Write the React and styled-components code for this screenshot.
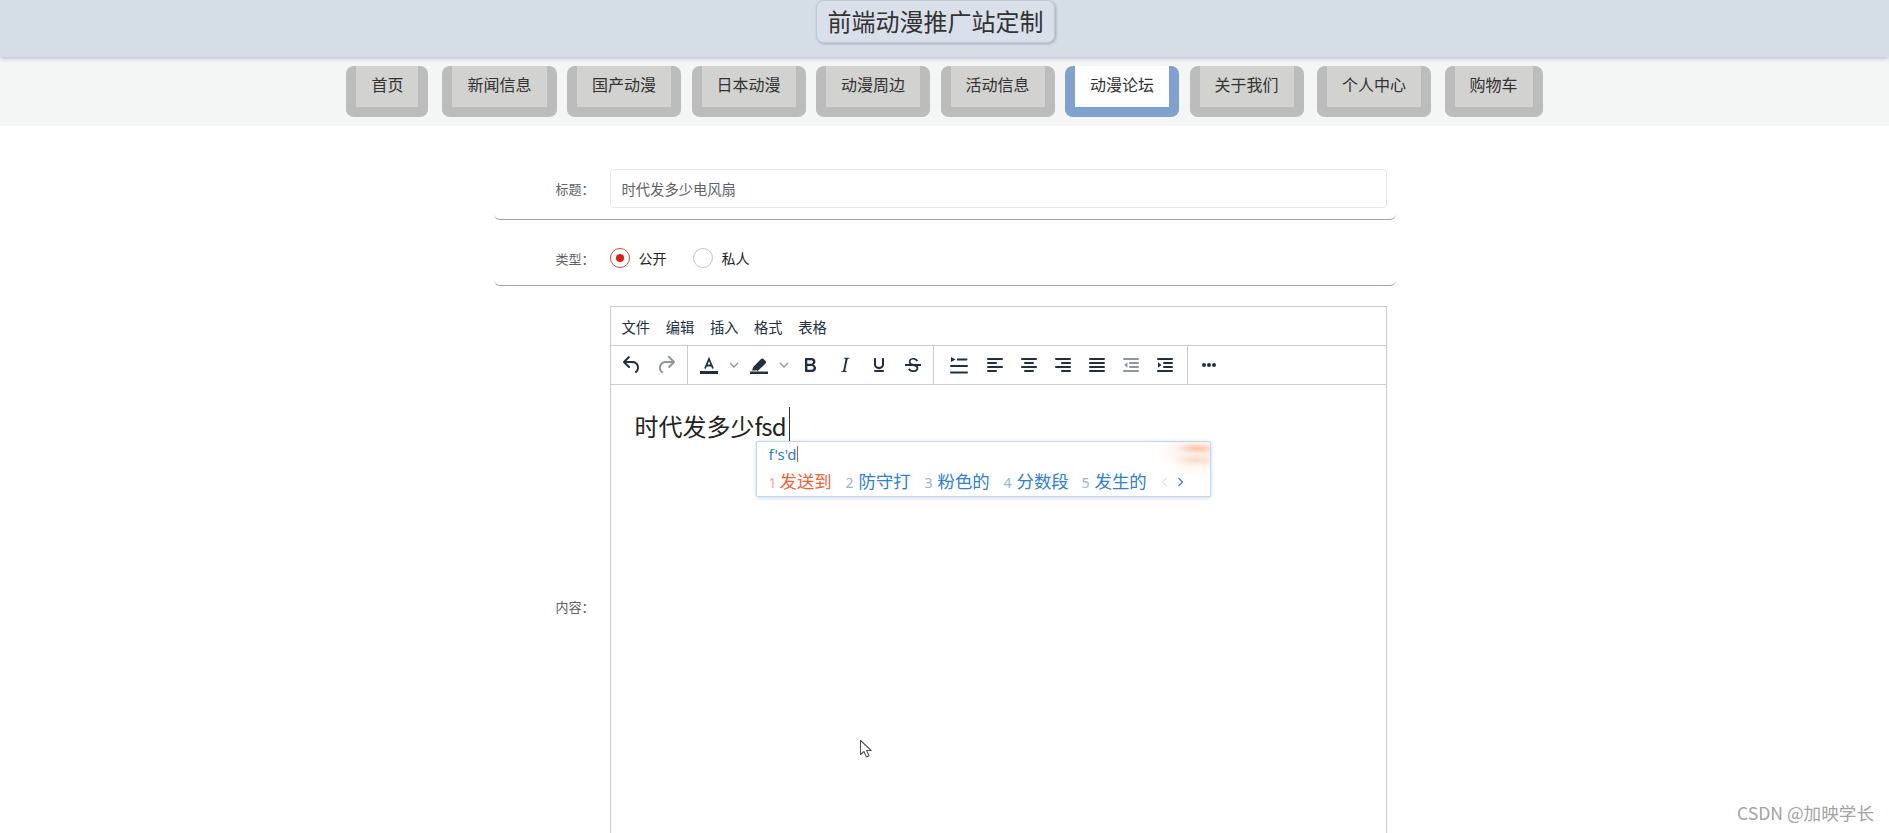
import styled, { createGlobalStyle } from "styled-components";

const GlobalStyle = createGlobalStyle`
    html, body {
        margin: 0;
        padding: 0;
        height: 100%;
        overflow: hidden;
        background: #fff;
        font-family: "Noto Sans CJK SC", "Noto Sans", sans-serif;
    }
`;

const Page = styled.div`
    position: relative;
    width: 1889px;
    height: 833px;
    overflow: hidden;
`;
const Header = styled.header`
    position: relative;
    z-index: 1;
    height: 57px;
    background: #d5dde7;
    box-shadow: 0 1px 5px rgba(90, 100, 120, 0.45);
    display: flex;
    justify-content: center;
`;
const Title = styled.h1`
    margin: 0 18px 0 0;
    box-sizing: border-box;
    width: 239px;
    height: 43px;
    border: 1px solid #c3c9d6;
    border-radius: 8px;
    background: #d9e0ea;
    box-shadow: 1px 1px 3px rgba(90, 100, 120, 0.4);
    font-size: 24px;
    font-weight: 400;
    line-height: 39px;
    text-align: center;
    color: #333;
`;
const NavBar = styled.nav`
    height: 69px;
    background: #f4f6f6;
    display: flex;
    justify-content: center;
    align-items: flex-start;
    gap: 10.5px;
    padding-top: 9px;
    box-sizing: border-box;
`;
const NavItem = styled.a`
    box-sizing: border-box;
    height: 51px;
    margin-left: ${(p) => p.$extra || 0}px;
    padding: 0 15px;
    border: 10px solid ${(p) => (p.$active ? "#7ea2cd" : "#bcbcbc")};
    border-top: none;
    border-radius: 8px;
    background: ${(p) => (p.$active ? "#fff" : "#d2d2d0")};
    font-size: 16px;
    line-height: 37px;
    color: #333;
    white-space: nowrap;
`;

const Form = styled.main`
    width: 902px;
    margin: 0 auto;
    padding-top: 43px;
`;
const Row = styled.div`
    display: flex;
    align-items: center;
    padding: ${(p) => p.$padding};
    margin-top: ${(p) => p.$top || 0}px;
    border-bottom: ${(p) => (p.$line ? "1px solid #9ea4b6" : "none")};
    border-radius: 6px;
`;
const Label = styled.label`
    flex: none;
    width: 101px;
    margin-right: 15px;
    text-align: right;
    font-size: 13px;
    color: #606266;
`;
const TextBox = styled.div`
    box-sizing: border-box;
    width: 777px;
    height: 39px;
    padding: 0 11px;
    border: 1px solid #e8e8e8;
    border-radius: 4px;
    font-size: 14.3px;
    line-height: 37px;
    color: #606266;
`;
const RadioGroup = styled.div`
    display: flex;
    align-items: center;
    height: 20px;
`;
const RadioDot = styled.span`
    box-sizing: border-box;
    width: 20px;
    height: 20px;
    margin-right: 9px;
    border-radius: 50%;
    border: 1.5px solid ${(p) => (p.$on ? "#cc4a40" : "#c4c4c4")};
    display: flex;
    align-items: center;
    justify-content: center;
    &::after {
        content: "";
        width: 8px;
        height: 8px;
        border-radius: 50%;
        background: ${(p) => (p.$on ? "#dc1f12" : "transparent")};
    }
`;
const RadioText = styled.span`
    width: 54px;
    font-size: 14px;
    color: #222;
`;

const Editor = styled.div`
    position: relative;
    box-sizing: border-box;
    width: 777px;
    height: 600px;
    border: 1px solid #ccc;
`;
const MenuBar = styled.div`
    height: 38px;
    padding-left: 11px;
    border-bottom: 1px solid #ccc;
    display: flex;
    align-items: center;
    gap: 15.6px;
`;
const MenuItem = styled.span`
    font-size: 14.3px;
    color: #222f3e;
`;
const ToolBar = styled.div`
    height: 38px;
    border-bottom: 1px solid #ccc;
    display: flex;
`;
const ToolGroup = styled.div`
    display: flex;
    align-items: center;
    padding: 0 4px;
    width: ${(p) => p.$width}px;
    box-sizing: border-box;
    border-right: ${(p) => (p.$last ? "none" : "1px solid #ccc")};
`;
const ToolButton = styled.span`
    flex: none;
    width: ${(p) => p.$width || 34}px;
    height: 34px;
    display: flex;
    align-items: center;
    justify-content: center;
    color: #222f3e;
    opacity: ${(p) => (p.$disabled ? 0.5 : 1)};
`;
const Chevron = styled.span`
    flex: none;
    width: ${(p) => p.$width || 16}px;
    display: flex;
    justify-content: center;
    opacity: 0.5;
    color: #222f3e;
`;
const Content = styled.div`
    position: relative;
    padding: 22px 24px 0;
    font-size: 24px;
    line-height: 36px;
    color: #222;
    display: flex;
    align-items: center;
`;
const Latin = styled.span`
    letter-spacing: -0.9px;
`;
const Caret = styled.span`
    display: inline-block;
    width: 1px;
    height: 37px;
    margin-left: 3px;
    background: #333;
`;
const Ime = styled.div`
    position: absolute;
    left: 145px;
    top: 56px;
    box-sizing: border-box;
    width: 455px;
    height: 56px;
    padding: 2px 12px 0;
    border: 1px solid #c0d8ee;
    border-radius: 2px;
    background:
        radial-gradient(ellipse 20px 5px at 97% 12%, rgba(247, 170, 130, 0.6), transparent),
        radial-gradient(ellipse 24px 6px at 97% 34%, rgba(247, 190, 160, 0.4), transparent),
        radial-gradient(ellipse 44px 26px at 98% 16%, rgba(250, 215, 195, 0.6), transparent),
        #fff;
    box-shadow: 0 1px 4px rgba(110, 140, 170, 0.35);
`;
const ImeInput = styled.div`
    height: 20px;
    font-family: "Noto Sans", sans-serif;
    font-size: 15px;
    line-height: 20px;
    color: #2f7cc8;
    display: flex;
    align-items: center;
    &::after {
        content: "";
        width: 1px;
        height: 16px;
        margin-left: 1px;
        background: #c05a3a;
    }
`;
const Candidates = styled.div`
    display: flex;
    align-items: baseline;
    margin-top: 5px;
`;
const Candidate = styled.span`
    width: ${(p) => p.$width}px;
    font-size: 17.4px;
    line-height: 24px;
    color: ${(p) => (p.$first ? "#ee6338" : "#2f80d2")};
    white-space: nowrap;
`;
const CandidateNumber = styled.span`
    margin-right: ${(p) => (p.$first ? 3 : 5)}px;
    font-family: "Noto Sans", sans-serif;
    font-size: 14px;
    color: ${(p) => (p.$first ? "#f2a68c" : "#93b6d8")};
`;
const Pager = styled.span`
    display: flex;
    align-items: center;
    gap: 9px;
    margin-left: 15px;
    align-self: center;
`;

const Cursor = styled.svg`
    position: absolute;
    left: 859px;
    top: 739px;
`;
const Watermark = styled.div`
    position: absolute;
    right: 15px;
    top: 802px;
    font-size: 17.6px;
    line-height: 22px;
    color: #a3a3a3;
`;

const Svg = ({ children, stroke }) => (
    <svg width="24" height="24" viewBox="0 0 24 24" fill={stroke ? "none" : "currentColor"}
        stroke={stroke ? "currentColor" : "none"} strokeWidth="2" strokeLinecap="round" strokeLinejoin="round">
        {children}
    </svg>
);
const Down = () => (
    <svg width="10" height="10" viewBox="0 0 10 10" fill="none" stroke="currentColor" strokeWidth="1.4">
        <path d="M1 3l4 4 4-4" />
    </svg>
);

const icons = {
    undo: <Svg><path d="M6.4 8H12c3.7 0 6.2 2 6.8 5.1.6 2.7-.4 5.6-2.3 6.8a1 1 0 0 1-1-1.8c1.1-.6 1.8-2.7 1.4-4.6-.5-2.1-2.1-3.5-4.9-3.5H6.4l3.3 3.3a1 1 0 1 1-1.4 1.4l-5-5a1 1 0 0 1 0-1.4l5-5a1 1 0 0 1 1.4 1.4L6.4 8z" /></Svg>,
    redo: <Svg><path d="M17.6 10H12c-2.8 0-4.4 1.4-4.9 3.5-.4 2 .3 4 1.4 4.6a1 1 0 1 1-1 1.8c-2-1.2-2.9-4.1-2.3-6.8.6-3 3-5.1 6.8-5.1h5.6l-3.3-3.3a1 1 0 1 1 1.4-1.4l5 5a1 1 0 0 1 0 1.4l-5 5a1 1 0 0 1-1.4-1.4l3.3-3.3z" /></Svg>,
    color: (
        <svg width="24" height="24" viewBox="0 0 24 24">
            <rect x="3" y="18" width="18" height="3" fill="currentColor" />
            <path d="M8 15.5L12 6l4 9.5M9.5 12.5h5" fill="none" stroke="currentColor" strokeWidth="1.8" />
        </svg>
    ),
    highlight: (
        <Svg>
            <rect x="3" y="18.5" width="18" height="2.5" />
            <path d="M5 17.5l1.2-3.6 7.8-7.8a1.8 1.8 0 0 1 2.5 0l2 2a1.8 1.8 0 0 1 0 2.5L10.7 18l-1.4-.8-1.3 .3z" />
        </Svg>
    ),
    bold: <Svg><path d="M7.8 19c-.3 0-.5 0-.6-.2l-.2-.5V5.7c0-.2 0-.4.2-.5l.6-.2h5c1.5 0 2.7.3 3.5 1 .7.6 1.1 1.4 1.1 2.5a3 3 0 0 1-.6 1.9c-.4.6-1 1-1.6 1.2.4.1.9.3 1.3.6s.8.7 1 1.2c.4.4.5 1 .5 1.6 0 1.3-.4 2.3-1.3 3-.8.7-2.1 1-3.8 1H7.8zm5-8.3c.6 0 1.2-.1 1.6-.5.4-.3.6-.7.6-1.3 0-1.1-.8-1.7-2.3-1.7H9.3v3.5h3.4zm.5 6c.7 0 1.3-.1 1.7-.4.4-.4.6-.9.6-1.5s-.2-1-.7-1.4c-.4-.3-1-.4-2-.4H9.4v3.8h4z" fillRule="evenodd" /></Svg>,
    italic: <Svg><path d="M16.7 4.7l-.1.9h-.3c-.6 0-1 0-1.4.3-.3.3-.4.6-.5 1.1l-2.1 9.8v.6c0 .5.4.8 1.4.8h.2l-.2.8H8l.2-.8h.2c1.1 0 1.8-.5 2-1.5l2-9.8.1-.5c0-.6-.4-.8-1.4-.8h-.3l.2-.9h5.8z" /></Svg>,
    underline: <Svg><path d="M16 5c.6 0 1 .4 1 1v5.5a4 4 0 0 1-.4 1.8l-1 1.4a5.3 5.3 0 0 1-5.5 1 5 5 0 0 1-1.6-1c-.5-.4-.8-.9-1.1-1.4a4 4 0 0 1-.4-1.8V6c0-.6.4-1 1-1s1 .4 1 1v5.5c0 .3 0 .6.2 1l.6.7a3.3 3.3 0 0 0 2.2.8 3.4 3.4 0 0 0 2.2-.8c.3-.2.4-.5.6-.8l.2-.9V6c0-.6.4-1 1-1zM8 17h8c.6 0 1 .4 1 1s-.4 1-1 1H8a1 1 0 0 1 0-2z" /></Svg>,
    strike: <Svg><path d="M15.6 8.5c-.5-.7-1-1.1-1.3-1.3-.6-.4-1.3-.6-2-.6-2.7 0-2.8 1.7-2.8 2.1 0 1.6 1.8 2 3.2 2.3 4.4.9 4.6 2.8 4.6 3.9 0 1.4-.7 4.1-5 4.1A6.2 6.2 0 0 1 7 16.4l1.5-1.1c.4.6 1.6 2 3.7 2 1.6 0 2.5-.4 3-1 .3-.4.3-.8.3-1.1 0-1.2-.9-1.8-3-2.3-2.3-.5-4.6-1-4.6-3.9 0-1.6 1-3.9 4.6-3.9 1.5 0 2.9.6 3.9 1.6.2.2.5.6.8 1l-1.6.8zM4 11h16v2H4z" /></Svg>,
    lineheight: (
        <Svg>
            <path d="M5 4l4.5 2.5L5 9zM11 5.5h9.5a1 1 0 0 1 0 2H11zM5 12h16a1 1 0 0 1 0 2H5a1 1 0 0 1 0-2zM5 18.5h16a1 1 0 0 1 0 2H5a1 1 0 0 1 0-2z" />
        </Svg>
    ),
    left: <Svg><path d="M5 5h14a1 1 0 0 1 0 2H5a1 1 0 1 1 0-2zm0 4h8a1 1 0 0 1 0 2H5a1 1 0 1 1 0-2zm0 8h8a1 1 0 0 1 0 2H5a1 1 0 0 1 0-2zm0-4h14a1 1 0 0 1 0 2H5a1 1 0 0 1 0-2z" /></Svg>,
    center: <Svg><path d="M5 5h14a1 1 0 0 1 0 2H5a1 1 0 1 1 0-2zm3 4h8a1 1 0 0 1 0 2H8a1 1 0 1 1 0-2zm0 8h8a1 1 0 0 1 0 2H8a1 1 0 0 1 0-2zm-3-4h14a1 1 0 0 1 0 2H5a1 1 0 0 1 0-2z" /></Svg>,
    right: <Svg><path d="M5 5h14a1 1 0 0 1 0 2H5a1 1 0 1 1 0-2zm6 4h8a1 1 0 0 1 0 2h-8a1 1 0 0 1 0-2zm0 8h8a1 1 0 0 1 0 2h-8a1 1 0 0 1 0-2zm-6-4h14a1 1 0 0 1 0 2H5a1 1 0 0 1 0-2z" /></Svg>,
    justify: <Svg><path d="M5 5h14a1 1 0 0 1 0 2H5a1 1 0 1 1 0-2zm0 4h14a1 1 0 0 1 0 2H5a1 1 0 1 1 0-2zm0 4h14a1 1 0 0 1 0 2H5a1 1 0 0 1 0-2zm0 4h14a1 1 0 0 1 0 2H5a1 1 0 0 1 0-2z" /></Svg>,
    outdent: <Svg><path d="M5 5h14a1 1 0 0 1 0 2H5a1 1 0 1 1 0-2zm6 4h8a1 1 0 0 1 0 2h-8a1 1 0 0 1 0-2zm0 4h8a1 1 0 0 1 0 2h-8a1 1 0 0 1 0-2zm-6 4h14a1 1 0 0 1 0 2H5a1 1 0 0 1 0-2zM8.5 9.2L5.2 12l3.3 2.8z" /></Svg>,
    indent: <Svg><path d="M5 5h14a1 1 0 0 1 0 2H5a1 1 0 1 1 0-2zm6 4h8a1 1 0 0 1 0 2h-8a1 1 0 0 1 0-2zm0 4h8a1 1 0 0 1 0 2h-8a1 1 0 0 1 0-2zm-6 4h14a1 1 0 0 1 0 2H5a1 1 0 0 1 0-2zM5 9.2L8.5 12 5 14.8z" /></Svg>,
    more: <Svg><circle cx="7" cy="12" r="2" /><circle cx="12" cy="12" r="2" /><circle cx="17" cy="12" r="2" /></Svg>,
};

const navItems = [
    { name: "首页" },
    { name: "新闻信息", extra: 3.6 },
    { name: "国产动漫" },
    { name: "日本动漫" },
    { name: "动漫周边" },
    { name: "活动信息" },
    { name: "动漫论坛", active: true },
    { name: "关于我们" },
    { name: "个人中心", extra: 3 },
    { name: "购物车", extra: 3 },
];
const menus = ["文件", "编辑", "插入", "格式", "表格"];
const candidates = [
    { text: "发送到", width: 77 },
    { text: "防守打", width: 79 },
    { text: "粉色的", width: 79 },
    { text: "分数段", width: 78 },
    { text: "发生的", width: 64 },
];

function App() {
    return (
        <Page>
            <GlobalStyle />
            <Header>
                <Title>前端动漫推广站定制</Title>
            </Header>
            <NavBar>
                {navItems.map((item) => (
                    <NavItem key={item.name} $active={item.active} $extra={item.extra}>{item.name}</NavItem>
                ))}
            </NavBar>
            <Form>
                <Row $line $padding="0 0 11px">
                    <Label>标题：</Label>
                    <TextBox>时代发多少电风扇</TextBox>
                </Row>
                <Row $line $padding="28px 0 17px">
                    <Label>类型：</Label>
                    <RadioGroup>
                        <RadioDot $on />
                        <RadioText>公开</RadioText>
                        <RadioDot />
                        <RadioText>私人</RadioText>
                    </RadioGroup>
                </Row>
                <Row $top={20}>
                    <Label>内容：</Label>
                    <Editor>
                        <MenuBar>
                            {menus.map((m) => <MenuItem key={m}>{m}</MenuItem>)}
                        </MenuBar>
                        <ToolBar>
                            <ToolGroup $width={77}>
                                <ToolButton>{icons.undo}</ToolButton>
                                <ToolButton $disabled>{icons.redo}</ToolButton>
                            </ToolGroup>
                            <ToolGroup $width={246}>
                                <ToolButton>{icons.color}</ToolButton>
                                <Chevron><Down /></Chevron>
                                <ToolButton>{icons.highlight}</ToolButton>
                                <Chevron><Down /></Chevron>
                                <ToolButton $width={36}>{icons.bold}</ToolButton>
                                <ToolButton>{icons.italic}</ToolButton>
                                <ToolButton>{icons.underline}</ToolButton>
                                <ToolButton>{icons.strike}</ToolButton>
                            </ToolGroup>
                            <ToolGroup $width={254}>
                                <ToolButton $width={40}>{icons.lineheight}</ToolButton>
                                <ToolButton>{icons.left}</ToolButton>
                                <ToolButton>{icons.center}</ToolButton>
                                <ToolButton>{icons.right}</ToolButton>
                                <ToolButton>{icons.justify}</ToolButton>
                                <ToolButton $disabled>{icons.outdent}</ToolButton>
                                <ToolButton>{icons.indent}</ToolButton>
                            </ToolGroup>
                            <ToolGroup $last $width={60}>
                                <ToolButton>{icons.more}</ToolButton>
                            </ToolGroup>
                        </ToolBar>
                        <Content>
                            时代发多少<Latin>fsd</Latin><Caret />
                            <Ime>
                                <ImeInput>f's'd</ImeInput>
                                <Candidates>
                                    {candidates.map((c, i) => (
                                        <Candidate key={c.text} $first={i === 0} $width={c.width}>
                                            <CandidateNumber $first={i === 0}>{i + 1}</CandidateNumber>{c.text}
                                        </Candidate>
                                    ))}
                                    <Pager>
                                        <svg width="7" height="12" viewBox="0 0 7 12" fill="none" stroke="#dfe6ee" strokeWidth="1.2"><path d="M5.5 2L1.5 6l4 4" /></svg>
                                        <svg width="7" height="12" viewBox="0 0 7 12" fill="none" stroke="#2f80d2" strokeWidth="1.2"><path d="M1.5 2l4 4-4 4" /></svg>
                                    </Pager>
                                </Candidates>
                            </Ime>
                        </Content>
                    </Editor>
                </Row>
            </Form>
            <Cursor width="14" height="22" viewBox="0 0 14 22">
                <path d="M1.5 1.5v14l3.5-3 2.4 5.5 2.6-1.2-2.4-5.3h4.6z" fill="#fff" stroke="#555" strokeWidth="1.1" strokeLinejoin="round" />
            </Cursor>
            <Watermark>CSDN @加映学长</Watermark>
        </Page>
    );
}

export default App;
